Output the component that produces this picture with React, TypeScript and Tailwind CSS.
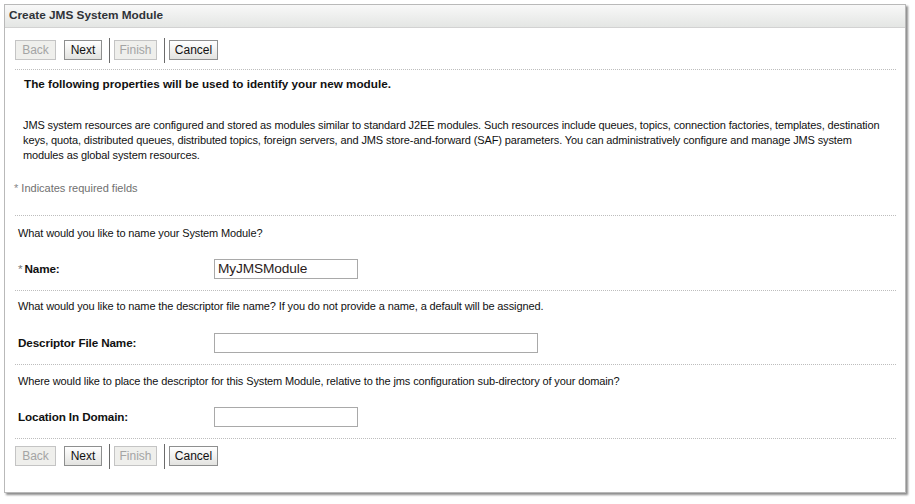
import React from 'react';

const Btn = ({ label, disabled, w }: { label: string; disabled?: boolean; w: string }) => (
  <button
    disabled={disabled}
    className={`${w} h-[20px] text-[12px] leading-none border flex items-center justify-center ${
      disabled
        ? 'border-[#c4c4c4] bg-[#efefec] text-[#a4a4a4]'
        : 'border-[#8e8f8f] bg-gradient-to-b from-[#ffffff] to-[#e3e3e0] text-[#111]'
    }`}
  >
    {label}
  </button>
);

const Sep = () => <div className="w-px h-[25px] bg-[#6b6b6b]" />;

const ButtonRow = () => (
  <div className="flex items-center h-[20px]">
    <Btn label="Back" disabled w="w-[41px]" />
    <div className="w-[8px]" />
    <Btn label="Next" w="w-[38px]" />
    <div className="w-[7px]" />
    <Sep />
    <div className="w-[4px]" />
    <Btn label="Finish" disabled w="w-[43px]" />
    <div className="w-[7px]" />
    <Sep />
    <div className="w-[4px]" />
    <Btn label="Cancel" w="w-[49px]" />
  </div>
);

const Dotted = ({ mt }: { mt: string }) => <div className={`${mt} border-t border-dotted border-[#bdbdbd]`} />;

const FieldRow = ({
  label,
  required,
  value,
  inputW,
  mt,
}: {
  label: string;
  required?: boolean;
  value?: string;
  inputW: string;
  mt: string;
}) => (
  <div className={`${mt} flex items-center h-[20px]`}>
    <div className="w-[199px] pl-[3px] text-[11.7px] font-bold text-[#111]">
      {required && <span className="font-normal text-[#777] mr-[2px]">*</span>}
      {label}
    </div>
    <input
      readOnly
      value={value ?? ''}
      className={`${inputW} h-[20px] border border-[#a9a9a9] px-[3px] text-[13.7px] text-[#2a1a1a] outline-none`}
    />
  </div>
);

export default function App() {
  return (
    <div className="w-[915px] h-[504px] bg-white font-['Liberation_Sans',Arial,sans-serif] overflow-hidden">
      <div className="ml-[4px] pt-[4px]">
        <div className="w-[902px] h-[489px] border border-[#b9b9b9] bg-white shadow-[2px_2px_2px_rgba(0,0,0,0.45)]">
          <div className="h-[23px] bg-gradient-to-b from-[#f8f8f8] to-[#e4e6e4] border-b border-[#d2d2d2] flex items-center pl-[4px] text-[11.8px] font-bold text-[#2f3338]">
            Create JMS System Module
          </div>

          <div className="pl-[10px] pr-[9px] text-[11px] text-[#111] tracking-[-0.12px]">
            <div className="pt-[12px] tracking-normal">
              <ButtonRow />
            </div>

            <Dotted mt="mt-[9px]" />

            <div className="mt-[6px] pl-[9px] leading-[15px] font-bold text-[11.7px] tracking-normal">
              The following properties will be used to identify your new module.
            </div>

            <p className="mt-[27px] pl-[8px] pr-[6px] leading-[15px]">
              JMS system resources are configured and stored as modules similar to standard J2EE modules. Such resources include queues, topics, connection factories, templates, destination keys, quota, distributed queues, distributed topics, foreign servers, and JMS store-and-forward (SAF) parameters. You can administratively configure and manage JMS system modules as global system resources.
            </p>

            <div className="mt-[18px] -ml-[1px] leading-[15px] text-[#6f6f6f] tracking-normal">
              <span className="text-[#888]">*</span> Indicates required fields
            </div>

            <Dotted mt="mt-[19px]" />

            <div className="mt-[10px] pl-[3px] leading-[15px]">What would you like to name your System Module?</div>
            <FieldRow mt="mt-[18px]" label="Name:" required value="MyJMSModule" inputW="w-[144px]" />

            <Dotted mt="mt-[11px]" />

            <div className="mt-[8px] pl-[3px] leading-[15px]">
              What would you like to name the descriptor file name? If you do not provide a name, a default will be assigned.
            </div>
            <FieldRow mt="mt-[19px]" label="Descriptor File Name:" inputW="w-[324px]" />

            <Dotted mt="mt-[11px]" />

            <div className="mt-[9px] pl-[3px] leading-[15px]">
              Where would like to place the descriptor for this System Module, relative to the jms configuration sub-directory of your domain?
            </div>
            <FieldRow mt="mt-[18px]" label="Location In Domain:" inputW="w-[144px]" />

            <Dotted mt="mt-[11px]" />

            <div className="mt-[7px] tracking-normal">
              <ButtonRow />
            </div>
          </div>
        </div>
      </div>
    </div>
  );
}
